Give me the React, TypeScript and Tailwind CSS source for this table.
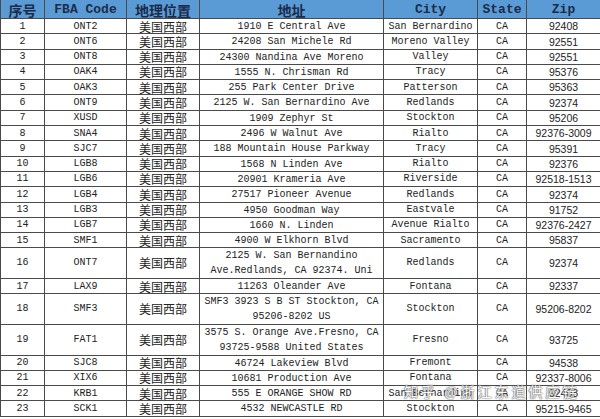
import React from 'react'

type Row = {
  no: number
  code: string
  addr: string[]
  city: string
  zip: string
}

const rows: Row[] = [
  { no: 1, code: 'ONT2', addr: ['1910 E Central Ave'], city: 'San Bernardino', zip: '92408' },
  { no: 2, code: 'ONT6', addr: ['24208 San Michele Rd'], city: 'Moreno Valley', zip: '92551' },
  { no: 3, code: 'ONT8', addr: ['24300 Nandina Ave Moreno'], city: 'Valley', zip: '92551' },
  { no: 4, code: 'OAK4', addr: ['1555 N. Chrisman Rd'], city: 'Tracy', zip: '95376' },
  { no: 5, code: 'OAK3', addr: ['255 Park Center Drive'], city: 'Patterson', zip: '95363' },
  { no: 6, code: 'ONT9', addr: ['2125 W. San Bernardino Ave'], city: 'Redlands', zip: '92374' },
  { no: 7, code: 'XUSD', addr: ['1909 Zephyr St'], city: 'Stockton', zip: '95206' },
  { no: 8, code: 'SNA4', addr: ['2496 W Walnut Ave'], city: 'Rialto', zip: '92376-3009' },
  { no: 9, code: 'SJC7', addr: ['188 Mountain House Parkway'], city: 'Tracy', zip: '95391' },
  { no: 10, code: 'LGB8', addr: ['1568 N Linden Ave'], city: 'Rialto', zip: '92376' },
  { no: 11, code: 'LGB6', addr: ['20901 Krameria Ave'], city: 'Riverside', zip: '92518-1513' },
  { no: 12, code: 'LGB4', addr: ['27517 Pioneer Avenue'], city: 'Redlands', zip: '92374' },
  { no: 13, code: 'LGB3', addr: ['4950 Goodman Way'], city: 'Eastvale', zip: '91752' },
  { no: 14, code: 'LGB7', addr: ['1660 N. Linden'], city: 'Avenue Rialto', zip: '92376-2427' },
  { no: 15, code: 'SMF1', addr: ['4900 W Elkhorn Blvd'], city: 'Sacramento', zip: '95837' },
  { no: 16, code: 'ONT7', addr: ['2125 W. San Bernandino', 'Ave.Redlands, CA 92374. Uni'], city: 'Redlands', zip: '92374' },
  { no: 17, code: 'LAX9', addr: ['11263 Oleander Ave'], city: 'Fontana', zip: '92337' },
  { no: 18, code: 'SMF3', addr: ['SMF3 3923 S B ST Stockton, CA', '95206-8202 US'], city: 'Stockton', zip: '95206-8202' },
  { no: 19, code: 'FAT1', addr: ['3575 S. Orange Ave.Fresno, CA', '93725-9588 United States'], city: 'Fresno', zip: '93725' },
  { no: 20, code: 'SJC8', addr: ['46724 Lakeview Blvd'], city: 'Fremont', zip: '94538' },
  { no: 21, code: 'XIX6', addr: ['10681 Production Ave'], city: 'Fontana', zip: '92337-8006' },
  { no: 22, code: 'KRB1', addr: ['555 E ORANGE SHOW RD'], city: 'San Bernardino', zip: '92408' },
  { no: 23, code: 'SCK1', addr: ['4532 NEWCASTLE RD'], city: 'Stockton', zip: '95215-9465' },
]

const cols = 'grid grid-cols-[44px_82px_73px_184px_94px_49px_74px]'
const cell = 'flex flex-col items-center justify-center border-r border-[#4a4a4a] text-center whitespace-nowrap'
const mono = "font-['Liberation_Mono',monospace] text-[10px]"
const cjk = "font-['Noto_Sans_CJK_SC',sans-serif]"

export default function App() {
  return (
    <div className="relative w-[600px] h-[419px] bg-white overflow-hidden text-[#222]">
      <div className="w-[600px] border-l border-[#4a4a4a]">
        {/* header */}
        <div className={`${cols} h-[19px] bg-[#5b9bd5] border-b border-[#4a4a4a] text-[#1c2b4a] font-bold`}>
          <div className={`${cell} ${cjk} text-[14px] leading-none`}>序号</div>
          <div className={`${cell} font-['Liberation_Mono',monospace] text-[13px]`}>FBA Code</div>
          <div className={`${cell} ${cjk} text-[14px] leading-none`}>地理位置</div>
          <div className={`${cell} ${cjk} text-[14px] leading-none`}>地址</div>
          <div className={`${cell} font-['Liberation_Mono',monospace] text-[13px]`}>City</div>
          <div className={`${cell} font-['Liberation_Mono',monospace] text-[13px]`}>State</div>
          <div className={`${cell} font-['Liberation_Mono',monospace] text-[13px]`}>Zip</div>
        </div>

        {rows.map((r) => (
          <div
            key={r.no}
            className={`${cols} border-b border-[#4a4a4a] ${r.addr.length > 1 ? 'h-[30.6px]' : 'h-[15.3px]'}`}
          >
            <div className={`${cell} ${mono} leading-none`}>{r.no}</div>
            <div className={`${cell} ${mono} leading-none`}>{r.code}</div>
            <div className={`${cell} ${cjk} text-[12px] leading-none`}>美国西部</div>
            <div className={`${cell} ${mono} leading-[15px]`}>
              {r.addr.map((line) => (
                <span key={line}>{line}</span>
              ))}
            </div>
            <div className={`${cell} ${mono} leading-none`}>{r.city}</div>
            <div className={`${cell} ${mono} leading-none`}>CA</div>
            <div className={`${cell} font-['Liberation_Sans',sans-serif] text-[10.5px] leading-none`}>{r.zip}</div>
          </div>
        ))}
      </div>

      {/* watermark */}
      <div
        className={`absolute left-[404px] top-[384px] ${cjk} text-[14px] tracking-[3px] leading-none text-white opacity-90 [text-shadow:0_0_1px_#444,0_0_1px_#444,0_0_2px_#777]`}
      >
        知乎 @浙江东道供应链
      </div>
    </div>
  )
}
